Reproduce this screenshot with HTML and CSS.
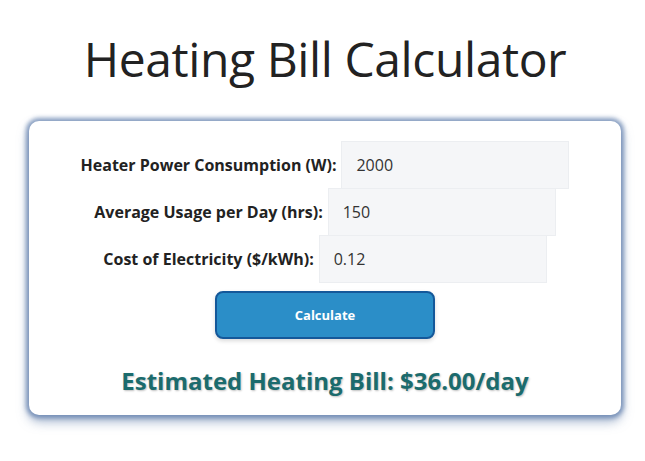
FILE: index.html
```html
<!DOCTYPE html>
<html lang="en">
<head>
    <meta charset="UTF-8">
    <meta name="viewport" content="width=device-width, initial-scale=1.0">
    <title>Heating Bill Calculator</title>
    <link rel="stylesheet" href="styles.css">
</head>
<body>
    <h1>Heating Bill Calculator</h1>

    <div class="calculator">
        <div class="form-row">
            <label for="power">Heater Power Consumption (W):</label>
            <input type="number" id="power" value="2000">
        </div>
        <div class="form-row">
            <label for="hours">Average Usage per Day (hrs):</label>
            <input type="number" id="hours" value="150">
        </div>
        <div class="form-row">
            <label for="cost">Cost of Electricity ($/kWh):</label>
            <input type="number" id="cost" value="0.12" step="0.01">
        </div>

        <button type="button" id="calcBtn">Calculate</button>

        <div class="result" id="result">Estimated Heating Bill: $36.00/day</div>
    </div>

    <script>
        document.getElementById('calcBtn').addEventListener('click', () => {
            const watts = parseFloat(document.getElementById('power').value) || 0;
            const hours = parseFloat(document.getElementById('hours').value) || 0;
            const rate = parseFloat(document.getElementById('cost').value) || 0;
            const bill = watts / 1000 * hours * rate;
            document.getElementById('result').textContent =
                'Estimated Heating Bill: $' + bill.toFixed(2) + '/day';
        });
    </script>
</body>
</html>
```

FILE: styles.css
```css
* {
    margin: 0;
    padding: 0;
    box-sizing: border-box;
}

html, body {
    min-height: 100%;
}

body {
    font-family: 'Open Sans', 'Noto Sans', sans-serif;
    background: #fff;
    color: #222;
    padding: 26px 0 40px 5px;
}

h1 {
    text-align: center;
    font-size: 48px;
    font-weight: 400;
    color: #222;
    letter-spacing: -0.4px;
    margin-bottom: 30px;
}

.calculator {
    width: 592px;
    margin: 0 auto;
    background: white;
    border-radius: 10px;
    padding: 20px 0 18px;
    box-shadow: 0 0 4px 3px rgba(100, 130, 175, 0.75), 0 6px 12px rgba(90, 120, 165, 0.6);
    text-align: center;
}

.form-row {
    height: 47px;
    display: flex;
    justify-content: center;
    align-items: center;
    gap: 5px;
}

label {
    font-size: 16px;
    font-weight: 700;
    color: #222;
}

input[type="number"] {
    width: 228px;
    height: 48px;
    padding: 0 14px;
    border: 1px solid #eceef1;
    background: #f5f6f8;
    font-family: inherit;
    font-size: 16px;
    color: #333;
    -moz-appearance: textfield;
}

input::-webkit-outer-spin-button,
input::-webkit-inner-spin-button {
    -webkit-appearance: none;
}

button {
    display: block;
    width: 220px;
    height: 48px;
    margin: 9px auto 0;
    background: #2b8ec8;
    border: 2px solid #14589a;
    border-radius: 8px;
    color: white;
    font-family: inherit;
    font-size: 13px;
    font-weight: 700;
    cursor: pointer;
    box-shadow: 0 2px 4px rgba(0, 0, 0, 0.15);
}

button:hover {
    background: #2480b6;
}

.result {
    margin-top: 25px;
    font-size: 24px;
    font-weight: 700;
    color: #1b6b6d;
    text-shadow: 1px 1px 2px rgba(0, 0, 0, 0.25);
}
```
